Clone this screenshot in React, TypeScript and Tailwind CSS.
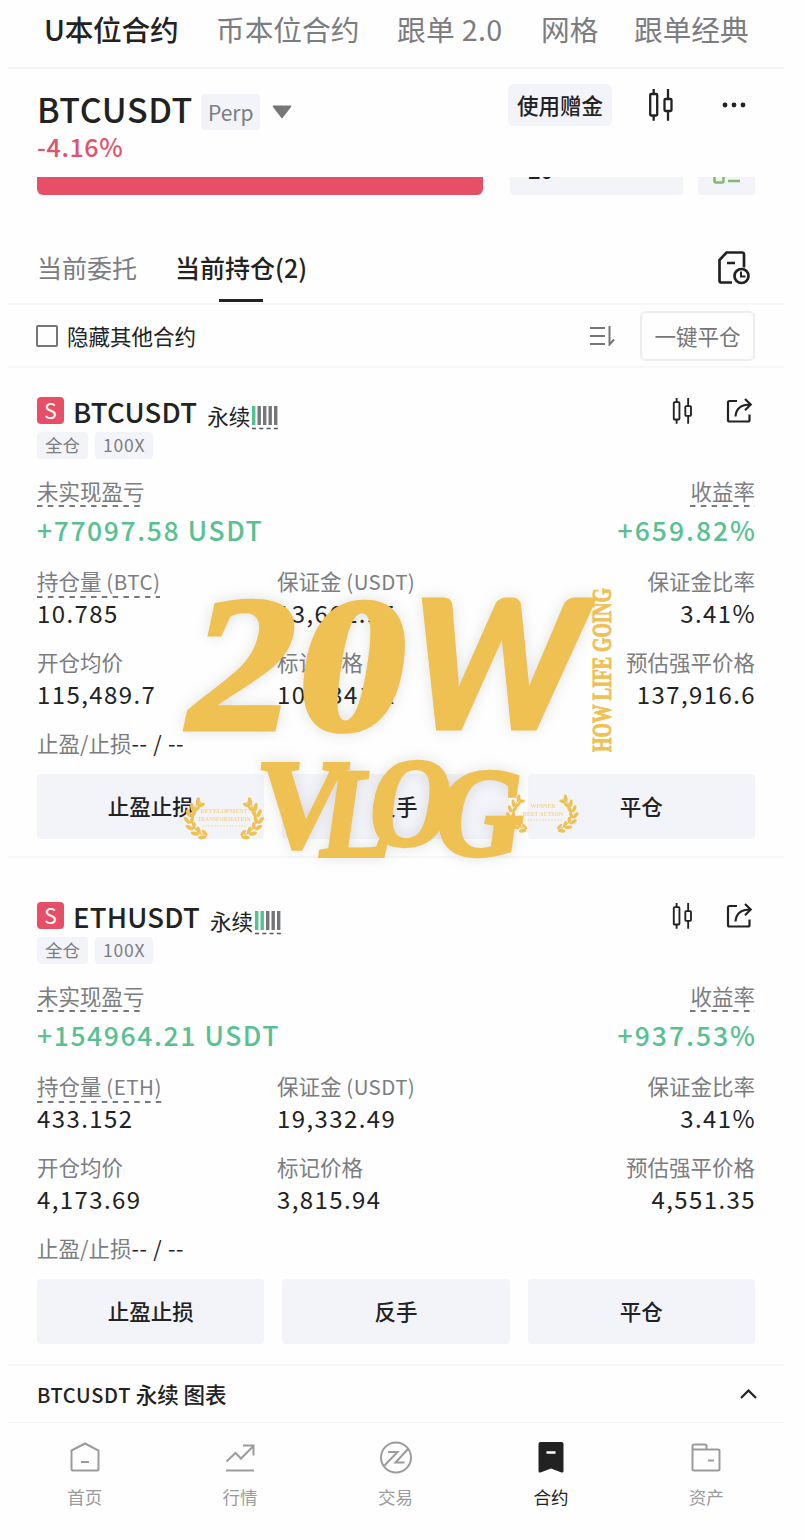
import React from 'react';

interface Position {
    symbol: string;
    coin: string;
    bars: number;
    pnl: string;
    roi: string;
    size: string;
    margin: string;
    ratio: string;
    entry: string;
    mark: string;
    liq: string;
}

const positions: Position[] = [
    {
        symbol: 'BTCUSDT',
        coin: 'BTC',
        bars: 1,
        pnl: '+77097.58 USDT',
        roi: '+659.82%',
        size: '10.785',
        margin: '13,662.95',
        ratio: '3.41%',
        entry: '115,489.7',
        mark: '108,341.1',
        liq: '137,916.6',
    },
    {
        symbol: 'ETHUSDT',
        coin: 'ETH',
        bars: 2,
        pnl: '+154964.21 USDT',
        roi: '+937.53%',
        size: '433.152',
        margin: '19,332.49',
        ratio: '3.41%',
        entry: '4,173.69',
        mark: '3,815.94',
        liq: '4,551.35',
    },
];

const CandleIcon: React.FC<{ className?: string }> = ({ className }) => (
    <svg className={className} viewBox="0 0 26 32" fill="none" stroke="currentColor" strokeWidth="2.3">
        <rect x="2.2" y="5" width="7" height="21.5" rx="1" />
        <path d="M5.7 0v5M5.7 26.5v5.3M20 0v10M20 22v9.8" />
        <rect x="16.5" y="10" width="7" height="12" rx="1" />
    </svg>
);

const ShareIcon = () => (
    <svg className="h-[26px] w-[27px]" viewBox="0 0 27 26" fill="none" stroke="currentColor" strokeWidth="2.2">
        <path d="M11 3H3.5Q2 3 2 4.500V22q0 1.500 1.500 1.500H22q1.500 0 1.500-1.500V16.500" />
        <path d="M9.500 18.500C10 11.500 14 6.500 24.500 6.500M19 1l5.700 5.500-5.700 5.700" />
    </svg>
);

const OrdersIcon = () => (
    <svg className="h-[36px] w-[34px]" viewBox="0 0 34 36" fill="none" stroke="currentColor" strokeWidth="2.700">
        <path d="M15 32.500H4.500Q2.500 32.500 2.500 30.500V10L9.500 2.500H25Q27 2.500 27 4.500V17.500M10 13h8" />
        <circle cx="24.500" cy="26" r="7" />
        <path d="M24 21.500V26.500h4.500" strokeWidth="2" />
    </svg>
);

const SignalBars: React.FC<{ active: number }> = ({ active }) => (
    <svg className="ml-[2px] h-6 w-[27px]" viewBox="0 0 27 24">
        {[0, 1, 2, 3, 4].map((i) => (
            <rect key={i} x={i * 5.5} y="0" width="3.400" height="19" fill={i < active ? '#55c092' : '#747678'} />
        ))}
        <path d="M0 22.500h26" stroke="#55585b" strokeWidth="1.600" strokeDasharray="4 3.300" />
    </svg>
);

const DashedLabel: React.FC<{ children: React.ReactNode }> = ({ children }) => (
    <span className="flex flex-col">
        <span>{children}</span>
        <svg className="-mt-px h-[2px] w-0 min-w-full">
            <path d="M0 1H400" stroke="#77797c" strokeWidth="2" strokeDasharray="5.500 5.300" />
        </svg>
    </span>
);

const ActionButton: React.FC<{ label: string }> = ({ label }) => (
    <button className="flex h-[65px] flex-1 items-center justify-center rounded-sm bg-[#f3f4f9] text-[21.5px] font-medium">
        {label}
    </button>
);

const PositionCard: React.FC<{ position: Position }> = ({ position: p }) => (
    <section className="mr-5 ml-2 h-[490px] border-b-2 border-[#f6f7f8] pr-[29px] pl-[29px] last:h-[493px]">
        <div className="flex h-[63px] items-end justify-between">
            <div className="flex h-[40px] items-center">
                <span className="mb-[2px] flex h-[27px] w-[27px] items-center justify-center rounded-[4px] bg-[#e64f66] text-[21px] leading-none text-white">
                    S
                </span>
                <span className="ml-[9px] text-[27.5px] leading-[40px] font-medium tracking-[0.200px]">{p.symbol}</span>
                <span className="mt-[10px] ml-[10px] text-[21.500px]">永续</span>
                <span className="mt-[13px] flex">
                    <SignalBars active={p.bars} />
                </span>
            </div>
            <div className="flex h-[40px] items-center gap-[33px]">
                <CandleIcon className="h-[26px] w-[21px]" />
                <span className="mr-[2px]">
                    <ShareIcon />
                </span>
            </div>
        </div>
        <div className="mt-px flex gap-[7px] text-[17.500px] leading-[26px] text-[#7b7d80]">
            <span className="h-[27px] rounded-sm bg-[#f3f4f9] px-2">全仓</span>
            <span className="h-[27px] rounded-sm bg-[#f3f4f9] px-2 tracking-[0.8px]">100X</span>
        </div>

        <div className="mt-[17px] flex h-[31px] justify-between text-[21.500px] leading-[30px] text-[#7b7d80]">
            <DashedLabel>未实现盈亏</DashedLabel>
            <DashedLabel>收益率</DashedLabel>
        </div>
        <div className="mt-[2px] flex h-[42px] items-center justify-between text-[26.500px] leading-[40px] font-medium tracking-[1.600px] text-[#58c192]">
            <span>{p.pnl}</span>
            <span className="-mr-[2px] tracking-[2px]">{p.roi}</span>
        </div>

        <div className="mt-[14px] grid h-[32px] grid-cols-[240px_1fr_auto] text-[21.500px] leading-[31px] text-[#7b7d80]">
            <div className="flex">
                <DashedLabel>
                    持仓量 <span className="text-[20.500px] tracking-[0.500px]">({p.coin})</span>
                </DashedLabel>
            </div>
            <span>
                保证金 <span className="text-[20.500px] tracking-[0.400px]">(USDT)</span>
            </span>
            <span>保证金比率</span>
        </div>
        <div className="grid h-[35px] grid-cols-[240px_1fr_auto] text-[24px] leading-[32px] tracking-[1.400px]">
            <span>{p.size}</span>
            <span>{p.margin}</span>
            <span className="-mr-px">{p.ratio}</span>
        </div>
        <div className="mt-[13px] grid h-[33px] grid-cols-[240px_1fr_auto] text-[21.500px] leading-[33px] text-[#7b7d80]">
            <span>开仓均价</span>
            <span>标记价格</span>
            <span>预估强平价格</span>
        </div>
        <div className="grid h-[33px] grid-cols-[240px_1fr_auto] text-[24px] leading-[32px] tracking-[1.400px]">
            <span>{p.entry}</span>
            <span>{p.mark}</span>
            <span className="-mr-px">{p.liq}</span>
        </div>
        <div className="mt-[15px] h-[33px] text-[21.500px] leading-[33px] text-[#7b7d80]">
            止盈/止损<span className="tracking-[0.700px] text-[#222]">-- / --</span>
        </div>
        <div className="mt-[15px] flex gap-[18px]">
            <ActionButton label="止盈止损" />
            <ActionButton label="反手" />
            <ActionButton label="平仓" />
        </div>
    </section>
);

const leaves = [
    [17, 3, 40],
    [11, 8, 20],
    [7, 14, 5],
    [5, 21, -10],
    [7, 28, -30],
    [12, 34, -50],
    [19, 38, -70],
];

const Laurel = () => (
    <g>
        <path d="M18 3C5 10 4 30 20 38" fill="none" stroke="#efc05a" strokeWidth="1.200" />
        {leaves.map(([x, y, r], i) => (
            <g key={i} transform={`translate(${x} ${y}) rotate(${r})`}>
                <ellipse cx="-2.500" cy="0" rx="2" ry="4.400" transform="rotate(-28)" />
                <ellipse cx="3.500" cy="0" rx="1.900" ry="3.900" transform="rotate(30)" />
            </g>
        ))}
    </g>
);

// Sticker that floats over the first position card
const VlogSticker = () => (
    <svg
        className="pointer-events-none absolute top-[570px] left-[160px] h-[310px] w-[480px] overflow-visible font-['Liberation_Serif',serif]"
        viewBox="160 570 480 310"
        fill="#efc052"
    >
        <g className="drop-shadow-[0_0_7px_rgba(110,120,125,0.22)]" fontSize="195" fontWeight="700" stroke="#efc052">
            <text transform="translate(177 729) skewX(-12) scale(1.08 0.99)" strokeWidth="5">2</text>
            <text transform="translate(289 730) skewX(-9) scale(1.13 0.99)" strokeWidth="4">0</text>
            <text
                className="font-['Lato',sans-serif] font-black italic"
                transform="translate(407 729) skewX(-3) scale(0.91 0.92)"
                strokeWidth="3"
            >
                W
            </text>
        </g>
        <g className="drop-shadow-[0_0_7px_rgba(110,120,125,0.22)]" fontSize="131" fontWeight="700" stroke="#efc052" strokeWidth="4">
            <text transform="translate(253 847) skewX(-6) scale(0.93 0.97)">V</text>
            <text transform="translate(318 856) skewX(-8) scale(0.82 0.97)">L</text>
            <text transform="translate(364 845) skewX(-8) scale(0.81 0.96)">O</text>
            <text transform="translate(430 855) skewX(-8) scale(0.88 0.96)">G</text>
        </g>
        <text
            transform="translate(611 752) rotate(-90)"
            fontSize="27"
            fontWeight="700"
            textLength="164"
            lengthAdjust="spacingAndGlyphs"
            stroke="#efc052"
            strokeWidth="0.900"
        >
            HOW LIFE GOING
        </text>
        <g transform="translate(184 799) scale(0.95)">
            <Laurel />
            <g transform="translate(84 0) scale(-1 1)">
                <Laurel />
            </g>
        </g>
        <g transform="translate(506 796) scale(0.86)">
            <Laurel />
            <g transform="translate(84 0) scale(-1 1)">
                <Laurel />
            </g>
        </g>
        <g textAnchor="middle" fontWeight="700" opacity="0.6">
            <text x="224" y="813" fontSize="6">DEVELOPMENT</text>
            <text x="224" y="821" fontSize="5.500">TRANSFORMATION</text>
            <text x="543" y="808" fontSize="6">WINNER</text>
            <text x="543" y="816" fontSize="6">BEST ACTION</text>
            <path d="M202 826h44M524 820h38" stroke="#efc052" strokeWidth="0.800" strokeDasharray="2 1" />
        </g>
    </svg>
);

const NavItem: React.FC<{ label: string; active?: boolean; children: React.ReactNode }> = ({ label, active, children }) => (
    <a className={`flex flex-1 flex-col items-center ${active ? 'text-[#222]' : 'text-[#999b9c]'}`}>
        <svg className="h-[36px] w-[36px]" viewBox="0 0 36 36" fill="none" stroke="currentColor" strokeWidth="2">
            {children}
        </svg>
        <span className="mt-[9px] text-[17.500px] leading-[26px]">{label}</span>
    </a>
);

export default function App() {
    return (
        <div className="relative h-[1540px] w-[804px] overflow-hidden bg-[#fefefe] font-['Noto_Sans_CJK_SC',sans-serif] text-[#222]">
            <nav className="mr-5 ml-2 flex h-[69px] items-start border-b-2 border-[#f4f5f6] pt-[7px] pl-9 text-[28.700px] leading-[44px] whitespace-nowrap text-[#7b7d80]">
                <span className="w-[172px] font-medium tracking-[-0.300px] text-[#222]">U本位合约</span>
                <span className="w-[181px]">币本位合约</span>
                <span className="w-[144px] tracking-[0.300px]">跟单 2.0</span>
                <span className="w-[93px]">网格</span>
                <span>跟单经典</span>
            </nav>

            <header className="flex h-[108px] justify-between pr-[57px] pl-[37px]">
                <div>
                    <div className="mt-[17px] flex h-[45px] items-center">
                        <h1 className="text-[34px] leading-[45px] font-medium tracking-[0.600px]">BTCUSDT</h1>
                        <span className="mt-[6px] ml-2 h-[36px] rounded-sm bg-[#f3f4f9] px-[7px] text-[21px] leading-[36px] text-[#7b7d80]">
                            Perp
                        </span>
                        <svg className="mt-[6px] ml-[12px] h-[14px] w-[20px]" viewBox="0 0 20 14" fill="#747678">
                            <path d="M1.500 0.500h17q1.500 0 .5 1.500L11 12.500q-1 1.300-2 0L1 2Q0 .500 1.500.500z" />
                        </svg>
                    </div>
                    <div className="text-[25px] leading-[30px] font-medium tracking-[0.600px] text-[#e0536d]">-4.16%</div>
                </div>
                <div className="mt-[14px] flex h-[43px] items-center">
                    <span className="rounded-md bg-[#f3f4f9] px-[9px] text-[21.500px] leading-[42px] font-medium">使用赠金</span>
                    <CandleIcon className="ml-[36px] h-[32px] w-[26px]" />
                    <svg className="ml-[48px] h-[6px] w-[25px]" viewBox="0 0 25 6" fill="currentColor">
                        <circle cx="3" cy="3" r="2.400" />
                        <circle cx="12" cy="3" r="2.400" />
                        <circle cx="21" cy="3" r="2.400" />
                    </svg>
                </div>
            </header>

            {/* order form, scrolled away under the header */}
            <div className="flex h-[18px] overflow-hidden pl-[37px]">
                <div className="w-[446px] rounded-b-md bg-[#e64f66]" />
                <div className="ml-[27px] flex w-[173px] items-end overflow-hidden rounded-b-sm bg-[#f3f4f9] pl-[18px]">
                    <span className="mb-[14px] text-[22px] leading-[24px] font-medium">20</span>
                </div>
                <div className="ml-[15px] w-[57px] rounded-b-sm bg-[#f3f4f9] pl-[15px]">
                    <svg className="h-[8px] w-[28px]" viewBox="0 0 28 8" fill="none" stroke="#84b873" strokeWidth="2.500">
                        <path d="M1.500 0v4q0 1.500 1.500 1.500h6q1.500 0 1.500-1.500V0M15 4h12" />
                    </svg>
                </div>
            </div>

            <div className="mr-5 ml-2 flex h-[110px] justify-between border-b-2 border-[#f6f7f8] pr-[33px] pl-[29px] text-[25px] leading-[38px]">
                <div className="flex gap-[38px] pt-[53px]">
                    <span className="text-[#7b7d80]">当前委托</span>
                    <span className="flex h-[54px] flex-col items-center justify-between font-medium">
                        当前持仓(2)
                        <i className="h-[3.500px] w-[44px] bg-[#222]" />
                    </span>
                </div>
                <div className="pt-[55px]">
                    <OrdersIcon />
                </div>
            </div>

            <div className="mr-5 ml-2 flex h-[63px] items-center justify-between border-b-2 border-[#f6f7f8] pr-[29px] pl-[28px] text-[21.500px]">
                <label className="flex items-center">
                    <i className="h-[22px] w-[22px] rounded-[2px] border-2 border-[#747678]" />
                    <span className="mt-px ml-[9px]">隐藏其他合约</span>
                </label>
                <div className="flex items-center text-[#747678]">
                    <svg className="mr-[25px] h-[20px] w-[25px]" viewBox="0 0 25 20" fill="none" stroke="currentColor" strokeWidth="2">
                        <path d="M0 2h15M0 10h15M0 18h15M19.500 0v18.500l4.500-5" />
                    </svg>
                    <button className="h-[50px] rounded-md border-2 border-[#ebedef] px-[12.500px] pt-px">一键平仓</button>
                </div>
            </div>

            <div className="flex flex-col gap-[15px]">
                {positions.map((p) => (
                    <PositionCard key={p.symbol} position={p} />
                ))}
            </div>

            <div className="mr-5 ml-2 flex h-[57px] items-center justify-between border-b border-[#f4f5f6] pr-[27px] pl-[29px] text-[20px] font-medium">
                <span>
                    <span className="tracking-[0.700px]">BTCUSDT</span> <span className="text-[21.500px]">永续 图表</span>
                </span>
                <svg className="h-[10px] w-[17px]" viewBox="0 0 17 10" fill="none" stroke="currentColor" strokeWidth="2.200">
                    <path d="M1 9l7.500-7.500L16 9" />
                </svg>
            </div>

            <nav className="flex pt-[16px] pr-[20px] pl-[7px]">
                <NavItem label="首页">
                    <path d="M4.500 11.500L18 4.500l13.500 7V30q0 1.500-1.500 1.500H6q-1.500 0-1.500-1.500zM14 23h8" />
                </NavItem>
                <NavItem label="行情">
                    <path d="M4.500 22.500l9-8.500 5.500 5.500L31 7.500M21 6.500h10.500v10M4 31.500h28" />
                </NavItem>
                <NavItem label="交易">
                    <circle cx="18" cy="18.500" r="15" />
                    <path d="M10 13h9.500L6.500 26.500M30 10L17.500 23.500h9" />
                </NavItem>
                <NavItem label="合约" active>
                    <path
                        d="M7.500 3h21q2 0 2 2v27q0 2-2 1.500L18 29.500 7.500 33.500q-2 .5-2-1.500V5q0-2 2-2z"
                        fill="currentColor"
                        stroke="none"
                    />
                    <path d="M13.500 13.500h9" stroke="#fff" strokeWidth="2.500" />
                </NavItem>
                <NavItem label="资产">
                    <path d="M4.500 10.500V7q0-1.500 1.500-1.500h11q1.500 0 1.500 1.500v3.500M4.500 10.500H30q1.500 0 1.500 1.500v18q0 1.500-1.500 1.500H6q-1.500 0-1.500-1.500zM20 21.500h6" />
                </NavItem>
            </nav>

            <VlogSticker />
        </div>
    );
}
